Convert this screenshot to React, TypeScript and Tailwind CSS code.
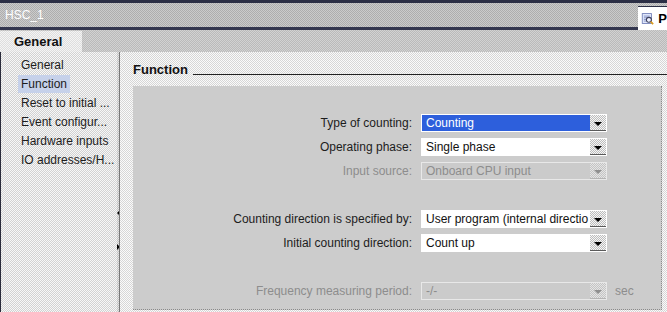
const FORM_ROWS = [
  { label: "Type of counting:", value: "Counting", state: "selected" },
  { label: "Operating phase:", value: "Single phase", state: "normal" },
  { label: "Input source:", value: "Onboard CPU input", state: "disabled" },
  null,
  { label: "Counting direction is specified by:", value: "User program (internal directio", state: "normal" },
  { label: "Initial counting direction:", value: "Count up", state: "normal" },
  null,
  { label: "Frequency measuring period:", value: "-/-", state: "disabled", unit: "sec" },
] as const;

const NAV_ITEMS = ["General", "Function", "Reset to initial ...", "Event configur...", "Hardware inputs", "IO addresses/H..."];

function PropsIcon() {
  return (
    <svg width="16" height="16" viewBox="0 0 16 16">
      <rect x="1.5" y="1.5" width="11" height="12" fill="#dfe6fa" stroke="#6d7bb5" />
      <path d="M3.5 4.5h7M3.5 6.5h4M3.5 8.5h3M3.5 10.5h3" stroke="#7d8ac0" />
      <circle cx="9.5" cy="9" r="3" fill="#eef2ff" stroke="#3b3f5c" strokeWidth="1.3" />
      <path d="M11.6 11.2l3 3" stroke="#d99a1c" strokeWidth="2" />
    </svg>
  );
}

function DropButton({ disabled }: { disabled?: boolean }) {
  return (
    <div
      className={`w-[16px] h-full flex items-center justify-center border-b ${
        disabled
          ? "border-[#b4b4b4] bg-[image:repeating-conic-gradient(#e4e4e4_0_25%,#c4c4c4_0_50%)]"
          : "border-[#5a5a5a] bg-[image:repeating-conic-gradient(#f6f6f6_0_25%,#bdbdbd_0_50%)]"
      } bg-[length:2px_2px]`}
    >
      <div
        className={`w-0 h-0 border-x-[4px] border-x-transparent border-t-[4px] mt-[2px] ${
          disabled ? "border-t-[#8f8f8f]" : "border-t-black"
        }`}
      />
    </div>
  );
}

function Dropdown({ value, state }: { value: string; state: string }) {
  const box =
    state === "selected"
      ? "bg-[#2d5fdc] text-white border-white"
      : state === "disabled"
        ? "bg-[#cbcbcb] text-[#8d8d8d] border-[#e8e8e8]"
        : "bg-white text-[#111] border-white";
  return (
    <div className={`w-[186px] h-[18px] border flex ${box}`}>
      <div className="flex-1 overflow-hidden whitespace-nowrap pl-[4px] leading-[16px]">{value}</div>
      <DropButton disabled={state === "disabled"} />
    </div>
  );
}

export default function App() {
  return (
    <div className="w-[667px] h-[312px] overflow-hidden flex flex-col font-['Liberation_Sans',Arial,sans-serif] text-[12px] text-[#1c1c1c] bg-[#d8d8d8]">
      <div className="h-[3px] bg-[#2c2f45]" />

      <div className="flex h-[27px]">
        <div className="flex-1 flex flex-col">
          <div className="h-[24px] flex items-center pl-[5px] text-white bg-[image:repeating-conic-gradient(#aeaeae_0_25%,#cbcbcb_0_50%)] bg-[length:2px_2px]">
            HSC_1
          </div>
          <div className="h-[3px] bg-[#34374f]" />
        </div>
        <div className="w-[29px] flex flex-col">
          <div className="h-[3px] bg-[image:repeating-conic-gradient(#aeaeae_0_25%,#cbcbcb_0_50%)] bg-[length:2px_2px]" />
          <div className="flex-1 bg-white border-t border-[#2c2f45] flex items-center pl-[3px] gap-[4px]">
            <PropsIcon />
            <span className="font-bold text-[13px] text-black">P</span>
          </div>
        </div>
      </div>

      <div className="h-[22px] flex bg-[image:repeating-conic-gradient(#bababa_0_25%,#d2d2d2_0_50%)] bg-[length:2px_2px]">
        <div className="w-[82px] mt-[1px] flex items-center pl-[14px] font-bold text-[13px] text-[#111] bg-[image:repeating-conic-gradient(#f4f4f4_0_25%,#dedede_0_50%)] bg-[length:2px_2px]">
          General
        </div>
      </div>

      <div className="flex-1 flex min-h-0">
        <div className="w-[119px] flex border-l border-[#2a2b3a] bg-[image:repeating-conic-gradient(#f7f7f7_0_25%,#d2d2d2_0_50%)] bg-[length:2px_2px]">
          <div className="flex-1 pt-[3px]">
            {NAV_ITEMS.map((item) => (
              <div key={item} className="h-[19px] flex items-center pl-[17px]">
                <span
                  className={`h-[18px] px-[3px] leading-[18px] whitespace-nowrap ${
                    item === "Function" ? "bg-[#c6d1ea]" : ""
                  }`}
                >
                  {item}
                </span>
              </div>
            ))}
          </div>
          <div className="w-[5px] flex flex-col items-center pt-[158px] bg-[image:repeating-conic-gradient(#e6e6e6_0_25%,#c2c2c2_0_50%)] bg-[length:2px_2px]">
            <div className="w-0 h-0 border-y-[3px] border-y-transparent border-r-[3px] border-r-black" />
            <div className="w-0 h-0 mt-[28px] border-y-[3px] border-y-transparent border-l-[3px] border-l-black" />
          </div>
        </div>
        <div className="w-px bg-[#7a7a7a]" />

        <div className="flex-1 flex flex-col pl-[13px] bg-[image:repeating-conic-gradient(#fafafa_0_25%,#d6d6d6_0_50%)] bg-[length:2px_2px]">
          <div className="flex items-end pt-[10px] h-[26px]">
            <span className="font-bold text-[13px] leading-[16px] text-[#111]">Function</span>
            <div className="flex-1 h-px bg-[#222] ml-[5px] mb-[3px]" />
          </div>

          <div className="mt-[8px] mr-[5px] h-[224px] bg-[#cccccc] border-r border-b border-dotted border-[#8a8a8a] pt-[28px] flex flex-col gap-[6px]">
            {FORM_ROWS.map((row, i) =>
              row === null ? (
                <div key={i} className="h-[18px]" />
              ) : (
                <div key={i} className="h-[18px] flex items-center">
                  <div
                    className={`w-[280px] text-right pr-[1px] whitespace-nowrap ${
                      row.state === "disabled" ? "text-[#8d8d8d]" : "text-[#1c1c1c]"
                    }`}
                  >
                    {row.label}
                  </div>
                  <div className="ml-[8px]">
                    <Dropdown value={row.value} state={row.state} />
                  </div>
                  {"unit" in row && <span className="ml-[8px] text-[#8d8d8d]">{row.unit}</span>}
                </div>
              ),
            )}
          </div>
        </div>
      </div>
    </div>
  );
}
